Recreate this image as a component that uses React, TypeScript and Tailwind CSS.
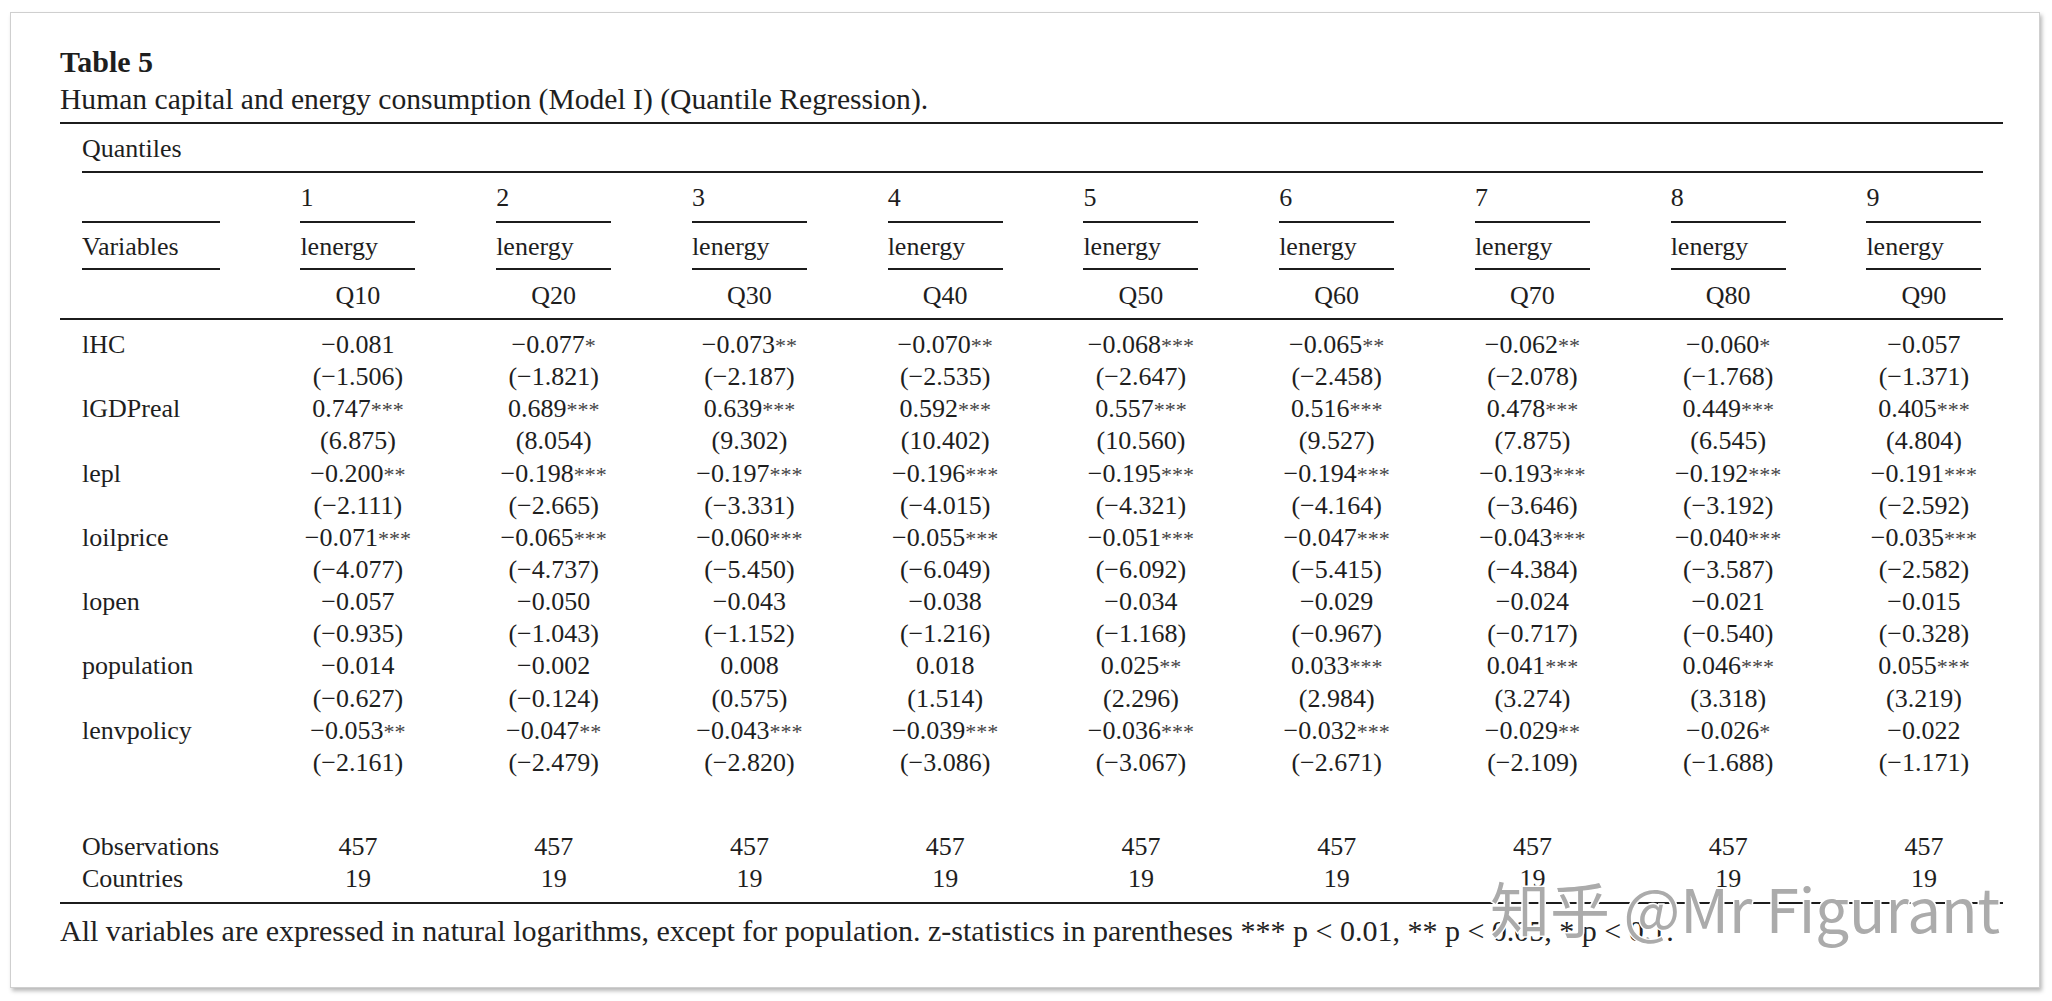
import React from "react";

const cols = ["1", "2", "3", "4", "5", "6", "7", "8", "9"];
const qs = ["Q10", "Q20", "Q30", "Q40", "Q50", "Q60", "Q70", "Q80", "Q90"];

const rows: [string, string[], string[]][] = [
  ["lHC", ["−0.081", "−0.077*", "−0.073**", "−0.070**", "−0.068***", "−0.065**", "−0.062**", "−0.060*", "−0.057"], ["(−1.506)", "(−1.821)", "(−2.187)", "(−2.535)", "(−2.647)", "(−2.458)", "(−2.078)", "(−1.768)", "(−1.371)"]],
  ["lGDPreal", ["0.747***", "0.689***", "0.639***", "0.592***", "0.557***", "0.516***", "0.478***", "0.449***", "0.405***"], ["(6.875)", "(8.054)", "(9.302)", "(10.402)", "(10.560)", "(9.527)", "(7.875)", "(6.545)", "(4.804)"]],
  ["lepl", ["−0.200**", "−0.198***", "−0.197***", "−0.196***", "−0.195***", "−0.194***", "−0.193***", "−0.192***", "−0.191***"], ["(−2.111)", "(−2.665)", "(−3.331)", "(−4.015)", "(−4.321)", "(−4.164)", "(−3.646)", "(−3.192)", "(−2.592)"]],
  ["loilprice", ["−0.071***", "−0.065***", "−0.060***", "−0.055***", "−0.051***", "−0.047***", "−0.043***", "−0.040***", "−0.035***"], ["(−4.077)", "(−4.737)", "(−5.450)", "(−6.049)", "(−6.092)", "(−5.415)", "(−4.384)", "(−3.587)", "(−2.582)"]],
  ["lopen", ["−0.057", "−0.050", "−0.043", "−0.038", "−0.034", "−0.029", "−0.024", "−0.021", "−0.015"], ["(−0.935)", "(−1.043)", "(−1.152)", "(−1.216)", "(−1.168)", "(−0.967)", "(−0.717)", "(−0.540)", "(−0.328)"]],
  ["population", ["−0.014", "−0.002", "0.008", "0.018", "0.025**", "0.033***", "0.041***", "0.046***", "0.055***"], ["(−0.627)", "(−0.124)", "(0.575)", "(1.514)", "(2.296)", "(2.984)", "(3.274)", "(3.318)", "(3.219)"]],
  ["lenvpolicy", ["−0.053**", "−0.047**", "−0.043***", "−0.039***", "−0.036***", "−0.032***", "−0.029**", "−0.026*", "−0.022"], ["(−2.161)", "(−2.479)", "(−2.820)", "(−3.086)", "(−3.067)", "(−2.671)", "(−2.109)", "(−1.688)", "(−1.171)"]],
];

const GRID = "grid grid-cols-[218.4px_repeat(8,195.76px)_115px]";

function Val({ v }: { v: string }) {
  const m = v.match(/^(.*?)(\**)$/);
  const num = m ? m[1] : v;
  const stars = m ? m[2] : "";
  return (
    <div className="w-[115px] flex justify-center whitespace-nowrap">
      <span>
        {num}
        {stars && <span className="text-[22px] text-[#444]">{stars}</span>}
      </span>
    </div>
  );
}

function Rule({ w }: { w: string }) {
  return <div className={`${w} h-[2px] bg-[#1c1c1c]`} />;
}

export default function App() {
  return (
    <div className="relative w-[2052px] h-[1001px] bg-white overflow-hidden font-['Liberation_Serif',serif] text-[#1e1e1e]">
      <div className="ml-[10px] mt-[12px] w-[2030px] h-[976px] border border-[#cfcfcf] bg-white shadow-[2px_3px_4px_rgba(0,0,0,0.28)] pl-[49px] pt-[33px]">
        <div className="h-[32px] leading-[32px] text-[30px] font-bold">Table 5</div>
        <div className="mt-[5px] h-[32px] leading-[32px] text-[29.6px]">
          Human capital and energy consumption (Model I) (Quantile Regression).
        </div>
        <div className="mt-[7px] w-[1943px] h-[2px] bg-[#1c1c1c]" />

        <div className="pl-[22px] text-[26px]">
          <div className="mt-[9px] h-[32px] leading-[32px]">Quantiles</div>
          <div className="mt-[6px] w-[1901px] h-[2px] bg-[#1c1c1c]" />

          <div className={`${GRID} mt-[9px] h-[32px] leading-[32px]`}>
            <div />
            {cols.map((c) => (
              <div key={c}>{c}</div>
            ))}
          </div>
          <div className={`${GRID} mt-[7px]`}>
            <Rule w="w-[138px]" />
            {cols.map((c) => (
              <Rule key={c} w="w-[115px]" />
            ))}
          </div>
          <div className={`${GRID} mt-[8px] h-[32px] leading-[32px]`}>
            <div>Variables</div>
            {cols.map((c) => (
              <div key={c}>lenergy</div>
            ))}
          </div>
          <div className={`${GRID} mt-[5px]`}>
            <Rule w="w-[138px]" />
            {cols.map((c) => (
              <Rule key={c} w="w-[115px]" />
            ))}
          </div>
          <div className={`${GRID} mt-[10px] h-[32px] leading-[32px]`}>
            <div />
            {qs.map((q) => (
              <Val key={q} v={q} />
            ))}
          </div>
        </div>

        <div className="mt-[6px] w-[1943px] h-[2px] bg-[#1c1c1c]" />

        <div className="pl-[22px] text-[26px] mt-[9px]">
          {rows.map(([name, vals, ts]) => (
            <React.Fragment key={name}>
              <div className={`${GRID} h-[32.15px] leading-[32px]`}>
                <div>{name}</div>
                {vals.map((v, i) => (
                  <Val key={i} v={v} />
                ))}
              </div>
              <div className={`${GRID} h-[32.15px] leading-[32px]`}>
                <div />
                {ts.map((v, i) => (
                  <Val key={i} v={v} />
                ))}
              </div>
            </React.Fragment>
          ))}

          <div className={`${GRID} mt-[52px] h-[32px] leading-[32px]`}>
            <div>Observations</div>
            {cols.map((c) => (
              <Val key={c} v="457" />
            ))}
          </div>
          <div className={`${GRID} h-[25px] leading-[32px] overflow-hidden`}>
            <div>Countries</div>
            {cols.map((c) => (
              <Val key={c} v="19" />
            ))}
          </div>
        </div>

        <div className="mt-[14px] w-[1943px] h-[2px] bg-[#1c1c1c]" />
        <div className="mt-[11px] h-[32px] leading-[32px] text-[30px] text-[#222] whitespace-nowrap">
          All variables are expressed in natural logarithms, except for population. z-statistics in parentheses *** p &lt; 0.01, ** p &lt; 0.05, * p &lt; 0.1.
        </div>
      </div>

      <div className="absolute left-[1490px] top-[877px] leading-none whitespace-nowrap text-[60px] text-[#ababab] font-['Noto_Sans_CJK_SC','Noto_Sans',sans-serif] [-webkit-text-stroke:3px_white] [paint-order:stroke_fill]">
        知乎 @Mr Figurant
      </div>
    </div>
  );
}
